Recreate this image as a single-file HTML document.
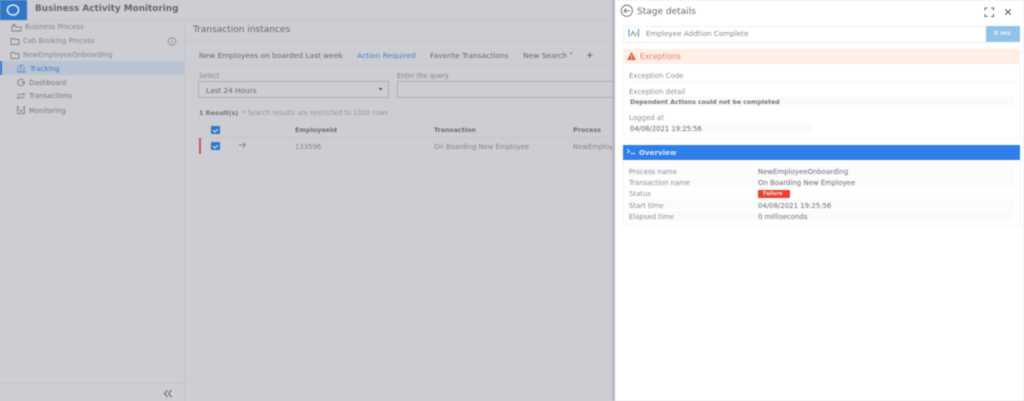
<!DOCTYPE html>
<html><head><meta charset="utf-8"><style>
html,body{margin:0;padding:0;width:1024px;height:401px;overflow:hidden;background:#cdced3}
#p{position:relative;width:1024px;height:401px;overflow:hidden;font-family:"DejaVu Sans","Liberation Sans",sans-serif;filter:blur(.55px)}
#p div,#p svg{position:absolute}
.t{white-space:nowrap;line-height:10px;font-size:7px;color:#6c6e75}
.b{font-weight:bold}
.d{color:#55575c}
.g{color:#85878c}
</style></head><body><div id="p">
<div style="left:0;top:0;width:27px;height:20px;background:#2f76c8"></div>
<svg style="left:6px;top:3px" width="15" height="15"><ellipse cx="7" cy="7" rx="5.6" ry="5" fill="none" stroke="#dfe6f2" stroke-width="1.6"/></svg>
<div class="t b" style="left:35px;top:3px;font-size:8.900px;line-height:12px;color:#66686e">Business Activity Monitoring</div>
<div style="left:0;top:20px;width:615px;height:1px;background:#c5c6cb"></div>
<div style="left:184px;top:20px;width:1px;height:381px;background:#c3c4c9"></div>
<div style="left:0;top:61px;width:184px;height:14px;background:#b9c3d3"></div>
<div style="left:0;top:61px;width:2px;height:14px;background:#2f76c8"></div>
<svg style="left:10px;top:23px" width="14" height="10" fill="none" stroke="#85878c" stroke-width=".9"><path d="M2 8V3h3l1 1h5v4zM3 3V1.500h3"/></svg>
<svg style="left:10px;top:37px" width="10" height="9" fill="none" stroke="#85878c" stroke-width=".9"><path d="M1 7.500V1.500h3l1 1h4v5z"/></svg>
<svg style="left:10px;top:51px" width="10" height="9" fill="none" stroke="#85878c" stroke-width=".9"><path d="M1 7.500V1.500h3l1 1h4v5z"/></svg>
<svg style="left:16px;top:64px" width="11" height="9" fill="none" stroke="#5a8ccf" stroke-width=".9"><path d="M1 8h9M2 7V4M5 7V2M8 7V3M2 3l3-2 3 1"/></svg>
<svg style="left:16px;top:78px" width="11" height="9" fill="none" stroke="#85878c"><circle cx="5" cy="4.500" r="3.300"/><path d="M5 4.500h4"/></svg>
<svg style="left:16px;top:92px" width="11" height="8" fill="none" stroke="#85878c" stroke-width=".9"><path d="M1 2.500h8M7 1l2 1.500M9 5.500H1M3 7L1 5.500"/></svg>
<svg style="left:16px;top:105px" width="10" height="10" fill="none" stroke="#85878c" stroke-width=".9"><path d="M1.500 2v6.500h7V2M1 1l2 2M9 1L7 3M3 4.500l2 2 2-2"/></svg>
<svg style="left:166px;top:36px" width="12" height="11" fill="none" stroke="#85878c" stroke-width=".8"><circle cx="6" cy="5.500" r="3.800"/><path d="M6 4v3.500"/></svg>
<div class="t g" style="left:25px;top:22px;font-size:6.900px">Business Process</div>
<div class="t g" style="left:23px;top:36px;font-size:6.900px">Cab Booking Process</div>
<div class="t g" style="left:23px;top:50px;font-size:6.900px">NewEmployeeOnboarding</div>
<div class="t" style="left:30px;top:63.500px;font-size:7.100px;color:#3a78c9">Tracking</div>
<div class="t" style="left:29px;top:77.500px;font-size:6.900px;color:#77797f">Dashboard</div>
<div class="t" style="left:29px;top:91px;font-size:6.900px;color:#77797f">Transactions</div>
<div class="t" style="left:29px;top:105.500px;font-size:6.900px;color:#77797f">Monitoring</div>
<div style="left:0;top:383px;width:184px;height:1px;background:#c5c6cb"></div>
<svg style="left:163px;top:389px" width="10" height="9" fill="none" stroke="#6d6f74" stroke-width="1.100"><path d="M4.500 1L1.500 4.500l3 3.500M8.500 1l-3 3.500 3 3.500"/></svg>

<div class="t" style="left:193px;top:24px;font-size:9px;line-height:12px;color:#66686e">Transaction instances</div>
<div style="left:185px;top:40px;width:430px;height:1px;background:#c6c7cc"></div>
<div class="t" style="left:199px;top:51px;font-size:7.450px;color:#66686e">New Employees on boarded Last week</div>
<div class="t" style="left:357px;top:51px;font-size:7.450px;color:#4a80ca">Action Required</div>
<div class="t" style="left:430px;top:51px;font-size:7.450px;color:#66686e">Favorite Transactions</div>
<div class="t" style="left:523px;top:51px;font-size:7.450px;color:#66686e">New Search</div>
<div class="t" style="left:570px;top:50px;font-size:5px;color:#5d5f65">*</div>
<div class="t" style="left:586px;top:51px;font-size:9px;color:#55575c">+</div>
<div style="left:195px;top:64px;width:420px;height:1px;background:#c6c7cc"></div>
<div class="t g" style="left:199px;top:71px;font-size:6.600px">Select</div>
<div class="t g" style="left:397px;top:71px;font-size:6.600px">Enter the query</div>
<div style="left:198px;top:81px;width:189px;height:15px;border:1px solid #adaeb4"></div>
<div style="left:397px;top:81px;width:220px;height:15px;border:1px solid #adaeb4"></div>
<div class="t" style="left:206px;top:85.500px;font-size:7.300px;color:#66686e">Last 24 Hours</div>
<svg style="left:377px;top:87px" width="7" height="5"><path d="M1.500 1h4L3.500 3.500z" fill="#55575c"/></svg>
<div class="t b" style="left:199px;top:108px;font-size:6.400px;color:#717379">1 Result(s)</div>
<div class="t g" style="left:242px;top:108px;font-size:6.700px;color:#96989d">* Search results are restricted to 1000 rows</div>
<div style="left:211px;top:126px;width:9px;height:8px;background:#2f76c8;border-radius:1px"></div>
<div style="left:211px;top:142px;width:9px;height:8px;background:#2f76c8;border-radius:1px"></div>
<svg style="left:211px;top:126px" width="9" height="8" fill="none" stroke="#e3e8f2"><path d="M2 4l2 2 3-3"/></svg>
<svg style="left:211px;top:142px" width="9" height="8" fill="none" stroke="#e3e8f2"><path d="M2 4l2 2 3-3"/></svg>
<div class="t b" style="left:295px;top:125px;font-size:6.400px;color:#6c6e73">EmployeeId</div>
<div class="t b" style="left:434px;top:125px;font-size:6.400px;color:#6c6e73">Transaction</div>
<div class="t b" style="left:573px;top:125px;font-size:6.400px;color:#6c6e73">Process</div>
<div style="left:195px;top:137px;width:420px;height:1px;background:#c6c7cc"></div>
<div style="left:199px;top:138px;width:2px;height:16px;background:#d0555c"></div>
<svg style="left:238px;top:141px" width="9" height="8" fill="none" stroke="#85878c" stroke-width=".9"><path d="M1 4h6.500M5 1.500L7.500 4 5 6.500"/></svg>
<div class="t g" style="left:295px;top:141.500px;font-size:6.900px">133596</div>
<div class="t g" style="left:434px;top:141.500px;font-size:6.800px">On Boarding New Employee</div>
<div class="t g" style="left:573px;top:141.500px;font-size:6.800px;width:42px;overflow:hidden">NewEmployeeOnboarding</div>

<div style="left:612px;top:0;width:3px;height:401px;background:#b9babf"></div>
<div style="left:615px;top:0;width:409px;height:401px;background:#fff"></div>
<svg style="left:620px;top:4px" width="14" height="14" fill="none" stroke="#5a5c60" stroke-width=".8"><circle cx="6.800" cy="6.800" r="5.600"/><path d="M10 6.800H4M6.300 4.500L4 6.800l2.300 2.300"/></svg>
<div class="t" style="left:637px;top:6px;font-size:9px;line-height:12px;color:#66686c">Stage details</div>
<svg style="left:984px;top:7px" width="11" height="11" fill="none" stroke="#66686c"><path d="M1 3.500V1h2.500M7 1h2.500v2.500M9.500 7v2.500H7M3.500 9.500H1V7"/></svg>
<svg style="left:1003px;top:7px" width="10" height="10" fill="none" stroke="#66686c" stroke-width="1.100"><path d="M2.200 2.200l5.600 5.600M7.800 2.200l-5.600 5.600"/></svg>
<div style="left:623px;top:26px;width:363px;height:15px;border:1px solid #e6f1fa;border-right:0"></div>
<div style="left:986px;top:26px;width:34px;height:16px;background:#8fc3e8"></div>
<div class="t b" style="left:994px;top:29px;font-size:6.200px;color:#e6f2fb">0 ms</div>
<svg style="left:628px;top:28px" width="12" height="11" fill="none" stroke-width="1"><path d="M1.500 1.500H1v7h.5" stroke="#4a90d0"/><path d="M10 1.500h.5v7H10" stroke="#4a90d0"/><path d="M3 8l2-5" stroke="#4a90d0"/><path d="M5 3l2 5" stroke="#6bb04a"/><path d="M7.500 8L9 4" stroke="#e0a030"/></svg>
<div class="t g" style="left:646px;top:29px;font-size:7.200px;color:#86888d">Employee Addtion Complete</div>

<div style="left:623px;top:49px;width:397px;height:15px;background:#fdeee6"></div>
<div style="left:623px;top:64px;width:396px;height:74px;border:1px solid #fdf3ee;border-top:0"></div>
<svg style="left:626px;top:51px" width="11" height="10"><path d="M5.500 1L10 9H1z" fill="#d8643a"/><path d="M5.500 4v2.500M5.500 7.300v.8" stroke="#fdeee6" stroke-width=".8"/></svg>
<div class="t" style="left:640px;top:52px;font-size:7.500px;color:#e08560">Exceptions</div>
<div class="t g" style="left:629px;top:71px;font-size:7px;color:#8c8e92">Exception Code</div>
<div style="left:629px;top:82px;width:385px;height:1px;background:#f4f4f4"></div>
<div class="t g" style="left:629px;top:87px;font-size:7px;color:#8c8e92">Exception detail</div>
<div style="left:628px;top:97px;width:386px;height:10px;background:#fafafa"></div>
<div class="t b" style="left:630px;top:98px;font-size:6.150px;color:#72747a">Dependent Actions could not be completed</div>
<div class="t g" style="left:629px;top:113px;font-size:7px;color:#8c8e92">Logged at</div>
<div style="left:628px;top:123px;width:185px;height:10px;background:#fafafa"></div>
<div class="t" style="left:630px;top:123.500px;font-size:6.800px;color:#66686c">04/08/2021 19:25:56</div>

<div style="left:623px;top:145px;width:397px;height:15px;background:#2f7fea"></div>
<svg style="left:626px;top:148px" width="11" height="8" fill="none" stroke="#e4eefc" stroke-width=".9"><path d="M1 1l2.500 2L1 5M4.500 5.500H9"/></svg>
<div class="t b" style="left:639px;top:148px;font-size:7.100px;color:#d8e6fb">Overview</div>
<div style="left:623px;top:160px;width:396px;height:65px;border:1px solid #f1f1f1;border-top:0"></div>
<div style="left:628px;top:166px;width:386px;height:10px;background:#fbfbfb"></div>
<div style="left:628px;top:177px;width:386px;height:10px;background:#fbfbfb"></div>
<div style="left:628px;top:199px;width:386px;height:10px;background:#fbfbfb"></div>
<div style="left:628px;top:211px;width:386px;height:10px;background:#fbfbfb"></div>
<div class="t g" style="left:629px;top:167px;font-size:6.900px;color:#8c8e92">Process name</div>
<div class="t g" style="left:629px;top:178px;font-size:6.900px;color:#8c8e92">Transaction name</div>
<div class="t g" style="left:629px;top:189px;font-size:6.900px;color:#8c8e92">Status</div>
<div class="t g" style="left:629px;top:201px;font-size:6.900px;color:#8c8e92">Start time</div>
<div class="t g" style="left:629px;top:212px;font-size:6.900px;color:#8c8e92">Elapsed time</div>
<div class="t" style="left:758px;top:167px;font-size:6.950px;color:#6c6e72">NewEmployeeOnboarding</div>
<div class="t" style="left:758px;top:178px;font-size:6.950px;color:#6c6e72">On Boarding New Employee</div>
<div style="left:758px;top:190px;width:32px;height:8px;background:#e8412f;border-radius:1px"></div>
<div class="t b" style="left:763px;top:189px;font-size:5px;color:#fbe3df">Failure</div>
<div class="t" style="left:758px;top:201px;font-size:6.950px;color:#6c6e72">04/08/2021 19:25:56</div>
<div class="t" style="left:758px;top:212px;font-size:6.950px;color:#6c6e72">0 milliseconds</div>
</div></body></html>
